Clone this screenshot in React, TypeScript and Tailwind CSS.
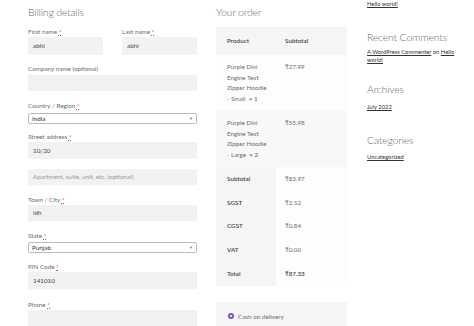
import React from "react";

const Req = () => <span className="text-[#e2401c] underline decoration-dotted">*</span>;

function Label({ children, req = true, cls = "" }: { children: React.ReactNode; req?: boolean; cls?: string }) {
  return (
    <div className={`h-[8px] leading-[8px] text-[6.3px] text-[#6d6d6d] ${cls}`}>
      {children} {req && <Req />}
    </div>
  );
}

function Input({ value, placeholder, w = "w-full", cls = "" }: { value?: string; placeholder?: string; w?: string; cls?: string }) {
  return (
    <div className={`h-[18px] bg-[#f2f2f2] flex items-center px-[5px] text-[6.3px] ${w} ${cls}`}>
      {value ? <span className="text-[#43454b]">{value}</span> : <span className="text-[#9a9a9a]">{placeholder}</span>}
    </div>
  );
}

function Select({ value, cls = "" }: { value: string; cls?: string }) {
  return (
    <div className={`h-[11px] bg-white border border-[#bbbbbb] rounded-[2px] flex items-center justify-between px-[3px] text-[6.3px] text-[#333] ${cls}`}>
      <span>{value}</span>
      <span className="text-[4px] text-[#777]">▼</span>
    </div>
  );
}

function Item({ size, qty }: { size: string; qty: string }) {
  const l = "h-[10.7px] leading-[10.7px] whitespace-nowrap";
  return (
    <div className="w-[69px] pl-[11px]">
      <div className={l}>Purple Divi</div>
      <div className={l}>Engine Text</div>
      <div className={l}>Zipper Hoodie</div>
      <div className={l}>
        - {size}&nbsp;&nbsp;<span className="font-semibold">×&nbsp;{qty}</span>
      </div>
    </div>
  );
}

export default function App() {
  const foot = [
    ["Subtotal", "₹83.97"],
    ["SGST", "₹2.52"],
    ["CGST", "₹0.84"],
    ["VAT", "₹0.00"],
    ["Total", "₹87.33"],
  ];
  const h = "h-[14px] leading-[14px] text-[10.5px] tracking-[-0.2px] font-light text-[#6d6d6d]";
  return (
    <div className="w-[474px] h-[326px] overflow-hidden bg-white flex font-['Lato',sans-serif]">
      {/* Left billing */}
      <div className="ml-[28px] w-[169px] flex flex-col">
        <div className={`mt-[5px] ${h}`}>Billing details</div>
        <div className="mt-[9px] flex justify-between">
          <div className="w-[75px]">
            <Label cls="mb-[1px]">First name</Label>
            <Input value="abhi" />
          </div>
          <div className="w-[75px]">
            <Label cls="mb-[1px]">Last name</Label>
            <Input value="abhi" />
          </div>
        </div>
        <Label req={false} cls="mt-[10px] mb-[2px]">Company name (optional)</Label>
        <Input />
        <Label cls="mt-[11px] mb-[3px]">Country / Region</Label>
        <Select value="India" />
        <Label cls="mt-[9px] mb-[1px]">Street address</Label>
        <Input value="10/20" />
        <Input placeholder="Apartment, suite, unit, etc. (optional)" cls="mt-[10px]" />
        <Label cls="mt-[11px] mb-[1px]">Town / City</Label>
        <Input value="ldh" />
        <Label cls="mt-[11px] mb-[2px]">State</Label>
        <Select value="Punjab" />
        <Label cls="mt-[10px] mb-[1px]">PIN Code</Label>
        <Input value="141010" />
        <Label cls="mt-[12px] mb-[1px]">Phone</Label>
        <Input />
      </div>

      {/* Order */}
      <div className="ml-[19px] w-[131px] flex flex-col">
        <div className={`mt-[5px] ${h}`}>Your order</div>
        <div className="mt-[8px] flex flex-col text-[6.3px]">
          <div className="h-[28px] bg-[#f5f5f5] flex items-center font-semibold text-[#43454b]">
            <div className="w-[69px] pl-[11px]">Product</div>
            <div>Subtotal</div>
          </div>
          <div className="h-[55px] bg-[#fdfdfd] flex pt-[7px] text-[#6d6d6d]">
            <Item size="Small" qty="1" />
            <div className="h-[10.7px] leading-[10.7px]">₹27.99</div>
          </div>
          <div className="h-[57px] bg-[#f8f8f8] flex pt-[8px] text-[#6d6d6d]">
            <Item size="Large" qty="2" />
            <div className="h-[10.7px] leading-[10.7px]">₹55.98</div>
          </div>
          <div className="flex flex-col">
            {foot.map(([k, v], i) => (
              <div key={k} className={`flex ${i === 4 ? "h-[25px]" : "h-[23.5px]"}`}>
                <div className="w-[60px] bg-[#f5f5f5] pl-[11px] flex items-center font-semibold text-[#43454b]">{k}</div>
                <div className={`flex-1 bg-[#fdfdfd] pl-[9px] flex items-center text-[#6d6d6d] ${i === 4 ? "font-semibold text-[#43454b]" : ""}`}>{v}</div>
              </div>
            ))}
          </div>
        </div>
        <div className="mt-[16px] h-[30px] bg-[#f5f5f5] flex items-start pt-[10px] pl-[12px] text-[6.3px] text-[#6d6d6d]">
          <span className="w-[6px] h-[6px] rounded-full bg-[#7f54b3] flex items-center justify-center mt-[1px]">
            <span className="w-[2px] h-[2px] rounded-full bg-white" />
          </span>
          <span className="ml-[4px]">Cash on delivery</span>
        </div>
      </div>

      {/* Sidebar */}
      <div className="ml-[20px] flex-1 flex flex-col text-[5.8px] text-[#333]">
        <div className="leading-[8px] underline">Hello world!</div>
        <div className={`mt-[22px] ${h}`}>Recent Comments</div>
        <div className="mt-[4px] leading-[7.5px] whitespace-nowrap">
          <span className="underline">A WordPress Commenter</span> on <span className="underline">Hello</span>
        </div>
        <div className="leading-[7.5px] underline">world!</div>
        <div className={`mt-[19px] ${h}`}>Archives</div>
        <div className="mt-[7px] leading-[8px] underline">July 2022</div>
        <div className={`mt-[22px] ${h}`}>Categories</div>
        <div className="mt-[6px] leading-[8px] underline">Uncategorized</div>
      </div>
    </div>
  );
}
